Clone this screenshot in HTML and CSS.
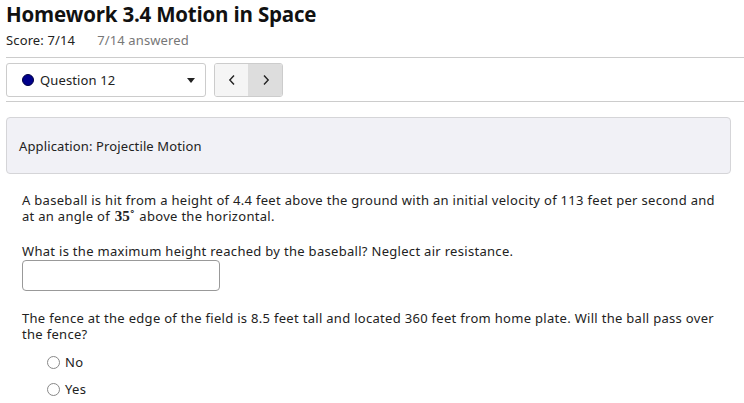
FILE: index.html
```html
<!DOCTYPE html>
<html>
<head>
<meta charset="utf-8">
<link rel="stylesheet" href="styles.css">
</head>
<body>
<div class="page">
  <h1 class="title">Homework 3.4 Motion in Space</h1>
  <div class="score"><span>Score: 7/14</span><span class="answered">7/14 answered</span></div>
  <div class="toolbar">
    <div class="select">
      <span class="dot"></span>
      <span class="qlabel">Question 12</span>
      <span class="caret"></span>
    </div>
    <div class="nav">
      <span class="navbtn prev"><svg width="8" height="12" viewBox="0 0 8 12"><path d="M6 1.5 L1.8 6 L6 10.5" fill="none" stroke="#222" stroke-width="1.4"/></svg></span>
      <span class="navbtn next"><svg width="8" height="12" viewBox="0 0 8 12"><path d="M2 1.5 L6.2 6 L2 10.5" fill="none" stroke="#222" stroke-width="1.4"/></svg></span>
    </div>
  </div>
  <div class="header-box">Application: Projectile Motion</div>
  <div class="question">
    <p class="para">A baseball is hit from a height of 4.4 feet above the ground with an initial velocity of 113 feet per second and at an angle of <span class="math">35˚</span> above the horizontal.</p>
    <p class="para tight">What is the maximum height reached by the baseball? Neglect air resistance.</p>
    <div class="answer"></div>
    <p class="para">The fence at the edge of the field is 8.5 feet tall and located 360 feet from home plate. Will the ball pass over the fence?</p>
    <ul class="choices">
      <li><span class="radio"></span>No</li>
      <li><span class="radio"></span>Yes</li>
    </ul>
  </div>
</div>
</body>
</html>
```
FILE: styles.css
```css
html, body { margin: 0; padding: 0; background: #fff; }
body { font-family: "Noto Sans", "Open Sans", sans-serif; color: #222; font-size: 13px; letter-spacing: 0.3px; overflow: hidden; }
.page { padding-left: 6px; }
.title { font-family: "Open Sans", sans-serif; font-weight: 700; font-size: 20.5px; margin: 0; line-height: 28px; color: #111; letter-spacing: -0.2px; }
.score { display: flex; gap: 22px; font-size: 13px; line-height: 18px; margin-top: 3px; padding-bottom: 8px; border-bottom: 1px solid #ccc; letter-spacing: 0.13px; }
.answered { color: #777; }
.toolbar { display: flex; gap: 8px; padding: 5px 0 4px; border-bottom: 1px solid #ccc; }
.select { height: 32px; border: 1px solid #ccc; border-radius: 3px; display: flex; align-items: center; padding-left: 15px; width: 183px; letter-spacing: 0.13px; }
.dot { width: 12px; height: 12px; border-radius: 50%; background: #00008b; border: 1px solid #000044; box-sizing: border-box; }
.qlabel { margin-left: 6px; flex: 1; }
.caret { width: 0; height: 0; border-left: 4px solid transparent; border-right: 4px solid transparent; border-top: 5px solid #222; margin-right: 10px; }
.nav { display: flex; border: 1px solid #ccc; border-radius: 3px; overflow: hidden; height: 32px; }
.navbtn { width: 33px; display: flex; align-items: center; justify-content: center; }
.prev { background: #f5f5f5; border-right: 1px solid #ddd; }
.next { background: #ddd; }
.header-box { margin-top: 15px; margin-right: 13px; height: 57px; box-sizing: border-box; background: #f1f1f6; border: 1px solid #d5d5d8; border-radius: 4px; padding-left: 12px; display: flex; align-items: center; letter-spacing: 0.13px; }
.question { padding: 0 22px 0 16px; margin-top: 18px; }
.para { margin: 0 0 19px; line-height: 16px; }
.para.tight { margin-bottom: 1px; }
.math { display: inline-block; font-family: "Liberation Serif", serif; font-size: 15px; font-weight: bold; letter-spacing: 0; line-height: 14px; margin: 0 1px; }
.answer { width: 196px; height: 29px; border: 1px solid #999; border-radius: 4px; margin-bottom: 19px; }
.choices { list-style: none; margin: -7px 0 0; padding-left: 25px; }
.choices li { display: flex; align-items: center; height: 16px; margin-top: 11px; }
.choices li:first-child { margin-top: 0; }
.radio { width: 11px; height: 11px; border: 1px solid #888; border-radius: 50%; margin-right: 5px; }
```
